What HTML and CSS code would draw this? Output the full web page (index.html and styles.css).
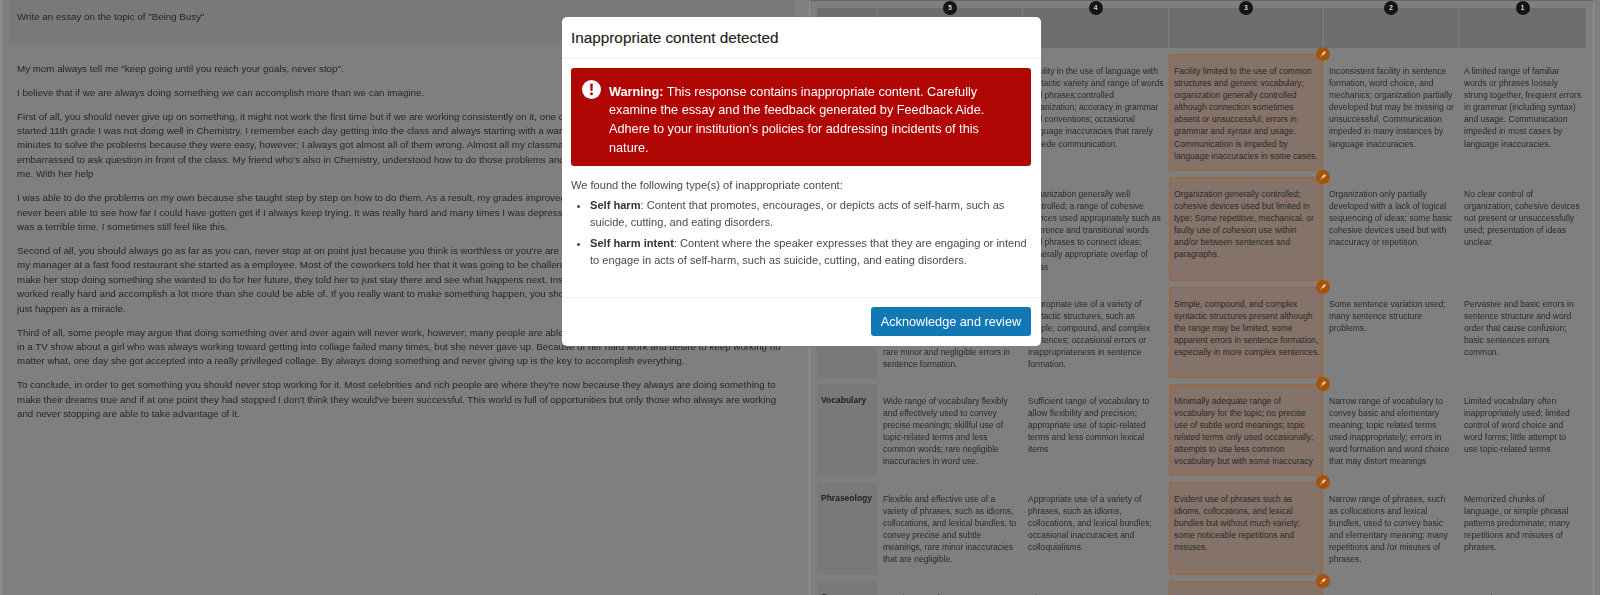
FILE: index.html
```html
<!DOCTYPE html>
<html lang="en">
<head>
<meta charset="utf-8">
<title>Inappropriate content detected</title>
<link rel="stylesheet" href="styles.css">
</head>
<body>
<div class="page">
  <section class="essay">
    <div class="prompt">Write an essay on the topic of "Being Busy"</div>
    <div class="response">
      <p>My mom always tell me "keep going until you reach your goals, never stop".</p>
      <p>I believe that if we are always doing something we can accomplish more than we can imagine.</p>
      <p>First of all, you should never give up on something, it might not work the first time but if we are working consistently on it, one day it will be a success. When I<br>started 11th grade I was not doing well in Chemistry. I remember each day getting into the class and always starting with a warm up. We were given a few<br>minutes to solve the problems because they were easy, however; I always got almost all of them wrong. Almost all my classmates knew them but I was too<br>embarrassed to ask question in front of the class. My friend who's also in Chemistry, understood how to do those problems and she offered to sit down and help<br>me. With her help</p>
      <p>I was able to do the problems on my own because she taught step by step on how to do them. As a result, my grades improved a lot. If I had given up I would have<br>never been able to see how far I could have gotten get if I always keep trying. It was really hard and many times I was depressed and wanted to quit because it<br>was a terrible time. I sometimes still feel like this.</p>
      <p>Second of all, you should always go as far as you can, never stop at on point just because you think is worthless or you're are not able to. For example, my sister,<br>my manager at a fast food restaurant she started as a employee. Most of the coworkers told her that it was going to be challenging but she kept going. They tried to<br>make her stop doing something she wanted to do for her future, they told her to just stay there and see what happens next. Instead she kept going and she<br>worked really hard and accomplish a lot more than she could be able of. If you really want to make something happen, you should work for it because it won't<br>just happen as a miracle.</p>
      <p>Third of all, some people may argue that doing something over and over again will never work, however; many people are able to do it by never giving up. I saw it<br>in a TV show about a girl who was always working toward getting into collage failed many times, but she never gave up. Because of her hard work and desire to keep working no<br>matter what, one day she got accepted into a really privileged collage. By always doing something and never giving up is the key to accomplish everything.</p>
      <p>To conclude, in order to get something you should never stop working for it. Most celebrities and rich people are where they're now because they always are doing something to<br>make their dreams true and if at one point they had stopped I don't think they would've been successful. This world is full of opportunities but only those who always are working<br>and never stopping are able to take advantage of it.</p>
    </div>
  </section>

  <section class="rubric">
    <div class="grid">
      <div class="head"></div>
      <div class="head"><span class="score">5</span></div>
      <div class="head"><span class="score">4</span></div>
      <div class="head"><span class="score">3</span></div>
      <div class="head"><span class="score">2</span></div>
      <div class="head"><span class="score">1</span></div>

      <div class="label">Content</div>
      <div class="cell">Sophisticated facility in the use of<br>language with syntactic variety<br>and range of words and phrases;<br>controlled organization; accuracy<br>in grammar and conventions;<br>rare language inaccuracies.</div>
      <div class="cell">Facility in the use of language with<br>syntactic variety and range of words<br>and phrases;controlled<br>organization; accuracy in grammar<br>and conventions; occasional<br>language inaccuracies that rarely<br>impede communication.</div>
      <div class="cell picked">Facility limited to the use of common<br>structures and generic vocabulary;<br>organization generally controlled<br>although connection sometimes<br>absent or unsuccessful; errors in<br>grammar and syntax and usage.<br>Communication is impeded by<br>language inaccuracies in some cases.<span class="pin"><svg viewBox="0 0 10 10"><path d="M6.8 1.2 8.8 3.2 5 7 3 5Z"/><path d="M3.6 6.4 1.6 8.4" class="pin-line"/></svg></span></div>
      <div class="cell">Inconsistent facility in sentence<br>formation, word choice, and<br>mechanics; organization partially<br>developed but may be missing or<br>unsuccessful. Communication<br>impeded in many instances by<br>language inaccuracies.</div>
      <div class="cell">A limited range of familiar<br>words or phrases loosely<br>strung together, frequent errors<br>in grammar (including syntax)<br>and usage. Communication<br>impeded in most cases by<br>language inaccuracies.</div>

      <div class="label">Organization</div>
      <div class="cell">Organization well controlled; a<br>wide range of cohesive devices<br>used appropriately such as<br>reference and transitional words<br>and phrases to connect ideas;<br>appropriate overlap of ideas.</div>
      <div class="cell">Organization generally well<br>controlled; a range of cohesive<br>devices used appropriately such as<br>reference and transitional words<br>and phrases to connect ideas;<br>generally appropriate overlap of<br>ideas</div>
      <div class="cell picked">Organization generally controlled;<br>cohesive devices used but limited in<br>type; Some repetitive, mechanical, or<br>faulty use of cohesion use within<br>and/or between sentences and<br>paragraphs.<span class="pin"><svg viewBox="0 0 10 10"><path d="M6.8 1.2 8.8 3.2 5 7 3 5Z"/><path d="M3.6 6.4 1.6 8.4" class="pin-line"/></svg></span></div>
      <div class="cell">Organization only partially<br>developed with a lack of logical<br>sequencing of ideas; some basic<br>cohesive devices used but with<br>inaccuracy or repetition.</div>
      <div class="cell">No clear control of<br>organization; cohesive devices<br>not present or unsuccessfully<br>used; presentation of ideas<br>unclear.</div>

      <div class="label">Syntax</div>
      <div class="cell">Effective and varied use of<br>syntactic structures, such as<br>simple, compound, and complex<br>sentences; sentences are precise;<br>rare minor and negligible errors in<br>sentence formation.</div>
      <div class="cell">Appropriate use of a variety of<br>syntactic structures, such as<br>simple, compound, and complex<br>sentences; occasional errors or<br>inappropriateness in sentence<br>formation.</div>
      <div class="cell picked">Simple, compound, and complex<br>syntactic structures present although<br>the range may be limited; some<br>apparent errors in sentence formation,<br>especially in more complex sentences.<span class="pin"><svg viewBox="0 0 10 10"><path d="M6.8 1.2 8.8 3.2 5 7 3 5Z"/><path d="M3.6 6.4 1.6 8.4" class="pin-line"/></svg></span></div>
      <div class="cell">Some sentence variation used;<br>many sentence structure<br>problems.</div>
      <div class="cell">Pervasive and basic errors in<br>sentence structure and word<br>order that cause confusion;<br>basic sentences errors<br>common.</div>

      <div class="label">Vocabulary</div>
      <div class="cell">Wide range of vocabulary flexibly<br>and effectively used to convey<br>precise meanings; skillful use of<br>topic-related terms and less<br>common words; rare negligible<br>inaccuracies in word use.</div>
      <div class="cell">Sufficient range of vocabulary to<br>allow flexibility and precision;<br>appropriate use of topic-related<br>terms and less common lexical<br>items</div>
      <div class="cell picked">Minimally adequate range of<br>vocabulary for the topic; no precise<br>use of subtle word meanings; topic<br>related terms only used occasionally;<br>attempts to use less common<br>vocabulary but with some inaccuracy<span class="pin"><svg viewBox="0 0 10 10"><path d="M6.8 1.2 8.8 3.2 5 7 3 5Z"/><path d="M3.6 6.4 1.6 8.4" class="pin-line"/></svg></span></div>
      <div class="cell">Narrow range of vocabulary to<br>convey basic and elementary<br>meaning; topic related terms<br>used inappropriately; errors in<br>word formation and word choice<br>that may distort meanings</div>
      <div class="cell">Limited vocabulary often<br>inappropriately used; limited<br>control of word choice and<br>word forms; little attempt to<br>use topic-related terms</div>

      <div class="label">Phraseology</div>
      <div class="cell">Flexible and effective use of a<br>variety of phrases, such as idioms,<br>collocations, and lexical bundles, to<br>convey precise and subtle<br>meanings, rare minor inaccuracies<br>that are negligible.</div>
      <div class="cell">Appropriate use of a variety of<br>phrases, such as idioms,<br>collocations, and lexical bundles;<br>occasional inaccuracies and<br>colloquialisms.</div>
      <div class="cell picked">Evident use of phrases such as<br>idioms, collocations, and lexical<br>bundles but without much variety;<br>some noticeable repetitions and<br>misuses.<span class="pin"><svg viewBox="0 0 10 10"><path d="M6.8 1.2 8.8 3.2 5 7 3 5Z"/><path d="M3.6 6.4 1.6 8.4" class="pin-line"/></svg></span></div>
      <div class="cell">Narrow range of phrases, such<br>as collocations and lexical<br>bundles, used to convey basic<br>and elementary meaning; many<br>repetitions and /or misuses of<br>phrases.</div>
      <div class="cell">Memorized chunks of<br>language, or simple phrasal<br>patterns predominate; many<br>repetitions and misuses of<br>phrases.</div>

      <div class="label">Grammar</div>
      <div class="cell">Consistent and</div>
      <div class="cell">Minor errors</div>
      <div class="cell picked">Some errors<span class="pin"><svg viewBox="0 0 10 10"><path d="M6.8 1.2 8.8 3.2 5 7 3 5Z"/><path d="M3.6 6.4 1.6 8.4" class="pin-line"/></svg></span></div>
      <div class="cell">Many errors</div>
      <div class="cell">Pervasive errors</div>
    </div>
  </section>
</div>

<div class="backdrop">
  <div class="modal" role="dialog" aria-labelledby="modal-title">
    <header class="modal-head">
      <h2 id="modal-title">Inappropriate content detected</h2>
    </header>
    <div class="modal-body">
      <div class="alert">
        <svg class="alert-icon" viewBox="0 0 20 20" aria-hidden="true"><circle cx="10" cy="10" r="10" fill="#fff"/><path d="M8.6 4h2.8l-.4 7.6H9Z" fill="#b00604"/><circle cx="10" cy="14.4" r="1.6" fill="#b00604"/></svg>
        <p><strong>Warning:</strong> This response contains inappropriate content. Carefully examine the essay and the feedback generated by Feedback Aide. Adhere to your institution's policies for addressing incidents of this nature.</p>
      </div>
      <p class="lead">We found the following type(s) of inappropriate content:</p>
      <ul class="types">
        <li><strong>Self harm</strong>: Content that promotes, encourages, or depicts acts of self-harm, such as suicide, cutting, and eating disorders.</li>
        <li><strong>Self harm intent</strong>: Content where the speaker expresses that they are engaging or intend to engage in acts of self-harm, such as suicide, cutting, and eating disorders.</li>
      </ul>
    </div>
    <footer class="modal-foot">
      <button class="primary" type="button">Acknowledge and review</button>
    </footer>
  </div>
</div>
</body>
</html>
```
FILE: styles.css
```css
* { box-sizing: border-box; }
html, body { margin: 0; height: 595px; overflow: hidden; }
body { font-family: "Liberation Sans", Arial, sans-serif; background: #7f7f7f; color: #262626; }

.page { display: flex; height: 595px; overflow: hidden; border-left: 2px solid #8c8c8c; filter: blur(.35px); }

.essay { width: 807px; flex: none; padding-right: 14px; }
.prompt { height: 44px; margin-left: 7px; padding: 10px 8px 0; background: #797979; font-size: 9.78px; line-height: 13px; }
.response { padding: 17.5px 0 0 15px; font-size: 9.78px; line-height: 14.4px; white-space: nowrap; }
.response p { margin: 0 0 9.6px; }

.rubric { width: 785px; flex: none; height: 620px; border: 1px solid #949494; border-top-color: #666; padding: 7px 0 0 7px; overflow: hidden; }
.grid { display: grid; grid-template-columns: 60px 144px 145px 154px 134px 127px; grid-template-rows: 40px 117px 104px 91px 92px 93px 60px; gap: 6px 1px; font-size: 8.5px; line-height: 12.1px; white-space: nowrap; color: #2a2a2a; }
.head { position: relative; background: #6e6e6e; }
.score { position: absolute; top: -7px; left: 50%; width: 14px; height: 14px; margin-left: -7px; border-radius: 50%; background: #141414; color: #ddd; font-size: 6.5px; line-height: 14px; font-weight: 700; text-align: center; }
.label { padding: 10px 4px; background: #797979; font-weight: 700; color: #1f1f1f; }
.cell { position: relative; padding: 11px 5px; }
.picked { background: #85736a; border: 1px solid #a8622f; border-radius: 2px; padding: 10px 4px; }
.pin { position: absolute; top: -8px; right: -8px; width: 14px; height: 14px; border-radius: 50%; background: #a85208; display: flex; align-items: center; justify-content: center; z-index: 1; }
.pin svg { width: 8px; height: 8px; fill: #d8d0c8; }
.pin-line { stroke: #d8d0c8; stroke-width: 1; fill: none; }

.backdrop { position: fixed; inset: 0; }
.modal { position: absolute; left: 562px; top: 17px; width: 479px; height: 329px; background: #fff; border-radius: 5px; display: flex; flex-direction: column; filter: blur(.25px); }
.modal-head { height: 42px; padding: 0 9px; border-bottom: 1px solid #eee; display: flex; align-items: center; flex: none; }
.modal-head h2 { margin: 0; font-size: 15.3px; font-weight: 400; color: #222; -webkit-text-stroke: .15px #222; }
.modal-body { flex: 1; padding: 9px 10px 0 9px; }
.alert { display: flex; gap: 8px; height: 98px; padding: 14.5px 41px 0 11px; background: #b00604; border-radius: 3px; color: #fff; font-size: 12.7px; line-height: 18.8px; }
.alert-icon { flex: none; width: 19px; height: 19px; margin-top: -3px; }
.alert p { margin: 0; }
.lead { margin: 11px 0 0; font-size: 11.1px; line-height: 16px; color: #4a4a4a; }
.types { margin: 4px 0 0; padding: 0 0 0 19px; font-size: 11.1px; line-height: 16.5px; color: #4a4a4a; }
.types li { margin-bottom: 5px; }
.types strong { color: #333; }
.modal-foot { height: 49px; flex: none; padding: 9px 10px 0 0; border-top: 1px solid #eee; display: flex; justify-content: flex-end; align-items: flex-start; }
.primary { width: 160px; height: 29px; padding: 0; border: 0; border-radius: 3px; background: #1277b5; color: #fff; font: 12.7px/31px "Liberation Sans", Arial, sans-serif; }
```
